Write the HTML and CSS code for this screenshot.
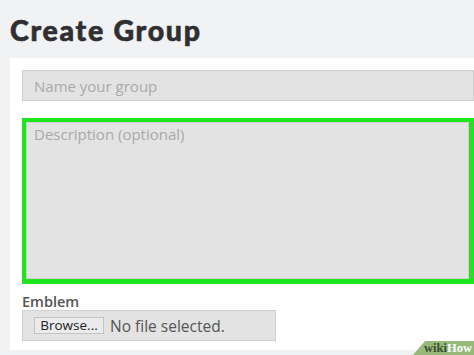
FILE: index.html
```html
<!DOCTYPE html>
<html lang="en">
<head>
    <meta charset="UTF-8">
    <meta name="viewport" content="width=device-width, initial-scale=1.0">
    <title>Create Group</title>
    <link rel="stylesheet" href="styles.css">
</head>
<body>

    <h1 class="page-title">Create Group</h1>

    <div class="group-form">
        <input class="field name-field" type="text" placeholder="Name your group">

        <div class="highlight-box">
            <textarea class="field desc-field" placeholder="Description (optional)"></textarea>
        </div>

        <div class="field-label">Emblem</div>
        <div class="file-box">
            <span class="browse-button">Browse...</span>
            <span class="file-status">No file selected.</span>
        </div>
    </div>

    <!-- watermark in the corner -->
    <div class="watermark"><span class="wm-wiki">wiki</span><span class="wm-how">How</span></div>

</body>
</html>
```

FILE: styles.css
```css
body {
    margin: 0;
    background: #f1f2f4;
    font-family: "Open Sans", Arial, sans-serif;
    height: 355px;
    overflow: hidden;
    position: relative;
}

.page-title {
    margin: 0;
    height: 58px;
    padding-left: 10px;
    box-sizing: border-box;
    padding-top: 13px;
    font-family: Lato, "Open Sans", sans-serif;
    font-weight: 900;
    font-size: 28.5px;
    line-height: 34px;
    letter-spacing: 1.7px;
    color: #2f2f31;
    -webkit-text-stroke: 0.6px #2f2f31;
}

.group-form {
    margin-left: 10px;
    background: white;
    padding: 12px 0 9px 12px;
}

.field {
    display: block;
    box-sizing: border-box;
    width: 100%;
    margin: 0;
    background: #e3e3e3;
    border: 1px solid #d0d0d0;
    font-family: "Open Sans", Arial, sans-serif;
    font-size: 15px;
    color: #555;
    outline: none;
}

.field::placeholder {
    color: #a9a9a9;
}

.name-field {
    height: 31px;
    padding: 0 11px;
    margin-bottom: 17px;
}

.highlight-box {
    border: 4px solid #1fe51f;
    border-right-width: 5px;
    border-bottom-width: 5px;
    height: 166px;
    box-sizing: border-box;
}

.desc-field {
    height: 100%;
    resize: none;
    padding: 1px 7px;
    border-color: #cfcfcf;
}

.field-label {
    margin-top: 8px;
    height: 18px;
    font-size: 14.5px;
    font-weight: 600;
    color: #555;
}

.file-box {
    width: 254px;
    height: 31px;
    box-sizing: border-box;
    background: #e3e3e3;
    border: 1px solid #d0d0d0;
    display: flex;
    align-items: center;
    padding-left: 11px;
    gap: 6px;
}

.browse-button {
    width: 70px;
    height: 17px;
    box-sizing: border-box;
    border: 1px solid #c4c4c4;
    background: #ebebeb;
    font-size: 13.5px;
    line-height: 15px;
    color: #222;
    text-align: center;
}

.file-status {
    font-size: 15.5px;
    color: #555;
}

.watermark {
    position: absolute;
    right: 0;
    bottom: 0;
    width: 50px;
    height: 14px;
    padding-left: 9px;
    padding-right: 2px;
    background: #96b97a;
    clip-path: polygon(12px 0, 100% 0, 100% 100%, 0 100%);
    font-family: "Liberation Serif", serif;
    font-weight: bold;
    font-size: 12.5px;
    line-height: 15px;
    text-align: right;
}

.wm-wiki {
    color: #3e4a34;
}

.wm-how {
    color: white;
}
```
